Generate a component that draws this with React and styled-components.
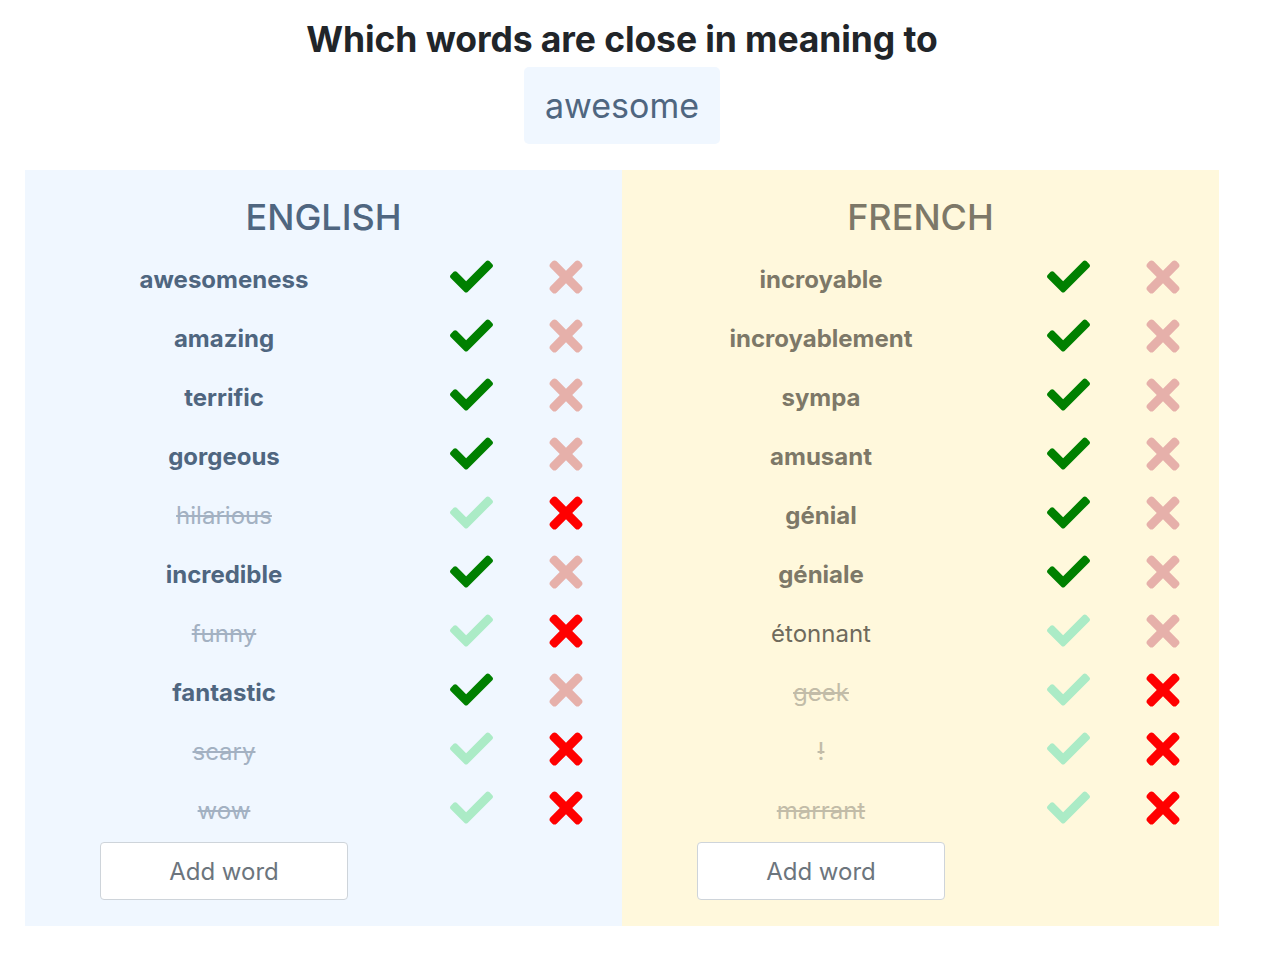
import React from "react";
import styled, { createGlobalStyle } from "styled-components";
import { FaCheck, FaTimes } from "react-icons/fa";

const Global = createGlobalStyle`
  html, body { margin: 0; padding: 0; background: #fff; }
  body { font-family: Inter, "Noto Sans", "Liberation Sans", sans-serif; }
`;

const Page = styled.div`
  width: 1194px;
  margin-left: 25px;
  padding-top: 18px;
  display: flex;
  flex-direction: column;
  align-items: center;
`;

const Title = styled.h1`
  margin: 0;
  font-size: 35.5px;
  font-weight: 700;
  color: #212529;
  line-height: 44px;
  letter-spacing: -0.1px;
`;

const Target = styled.div`
  margin-top: 5px;
  background: #f0f7ff;
  border-radius: 5px;
  height: 77px;
  padding: 0 21px;
  display: flex;
  align-items: center;
  font-size: 34px;
  color: #4f6680;
`;

const Panels = styled.div`
  margin-top: 26px;
  width: 100%;
  display: grid;
  grid-template-columns: 597px 597px;
`;

const Panel = styled.section`
  background: ${(p) => p.$bg};
  padding: 22px 0 26px;
`;

const Heading = styled.h2`
  margin: 0 0 5px;
  text-align: center;
  font-size: 36px;
  font-weight: 500;
  line-height: 50px;
  color: ${(p) => p.$color};
`;

const Row = styled.div`
  display: grid;
  grid-template-columns: 398px 96px 94px;
  height: 59px;
  align-items: center;
`;

const Word = styled.span`
  text-align: center;
  font-size: 24px;
  font-weight: ${(p) => (p.$bold ? 700 : 400)};
  color: ${(p) => p.$color};
  text-decoration: ${(p) => (p.$struck ? "line-through" : "none")};
  padding-top: 6px;
`;

const IconCell = styled.span`
  display: flex;
  justify-content: center;
  align-items: center;
  color: ${(p) => p.$color};
`;

const ButtonRow = styled.div`
  width: 398px;
  display: flex;
  justify-content: center;
  padding-top: 5px;
`;

const AddButton = styled.button`
  width: 248px;
  height: 58px;
  background: #fff;
  border: 1px solid #ced4da;
  border-radius: 4px;
  font-family: Inter, "Noto Sans", "Liberation Sans", sans-serif;
  font-size: 24px;
  color: #6c757d;
  cursor: pointer;
`;

const GREEN = "#008000";
const LIGHT_GREEN = "#abebc6";
const RED = "#ff0000";
const LIGHT_RED = "#e6b0aa";

const english = [
  ["awesomeness", "yes"],
  ["amazing", "yes"],
  ["terrific", "yes"],
  ["gorgeous", "yes"],
  ["hilarious", "no"],
  ["incredible", "yes"],
  ["funny", "no"],
  ["fantastic", "yes"],
  ["scary", "no"],
  ["wow", "no"],
];

const french = [
  ["incroyable", "yes"],
  ["incroyablement", "yes"],
  ["sympa", "yes"],
  ["amusant", "yes"],
  ["génial", "yes"],
  ["géniale", "yes"],
  ["étonnant", "none"],
  ["geek", "no"],
  ["!", "no"],
  ["marrant", "no"],
];

function Column({ title, words, bg, headColor, wordColor, plainColor, struckColor }) {
  return (
    <Panel $bg={bg}>
      <Heading $color={headColor}>{title}</Heading>
      {words.map(([w, state]) => (
        <Row key={w}>
          <Word
            $bold={state === "yes"}
            $struck={state === "no"}
            $color={state === "yes" ? wordColor : state === "no" ? struckColor : plainColor}
          >
            {w}
          </Word>
          <IconCell $color={state === "yes" ? GREEN : LIGHT_GREEN}>
            <FaCheck size={43} />
          </IconCell>
          <IconCell $color={state === "no" ? RED : LIGHT_RED}>
            <FaTimes size={48} />
          </IconCell>
        </Row>
      ))}
      <ButtonRow>
        <AddButton>Add word</AddButton>
      </ButtonRow>
    </Panel>
  );
}

export default function App() {
  return (
    <>
      <Global />
      <Page>
        <Title>Which words are close in meaning to</Title>
        <Target>awesome</Target>
        <Panels>
          <Column
            title="ENGLISH"
            words={english}
            bg="#f0f7ff"
            headColor="#4f6680"
            wordColor="#4f6680"
            plainColor="#4f6680"
            struckColor="#a3b1c2"
          />
          <Column
            title="FRENCH"
            words={french}
            bg="#fff8dc"
            headColor="#7d7868"
            wordColor="#7d7868"
            plainColor="#6f6a5c"
            struckColor="#c2bca8"
          />
        </Panels>
      </Page>
    </>
  );
}
